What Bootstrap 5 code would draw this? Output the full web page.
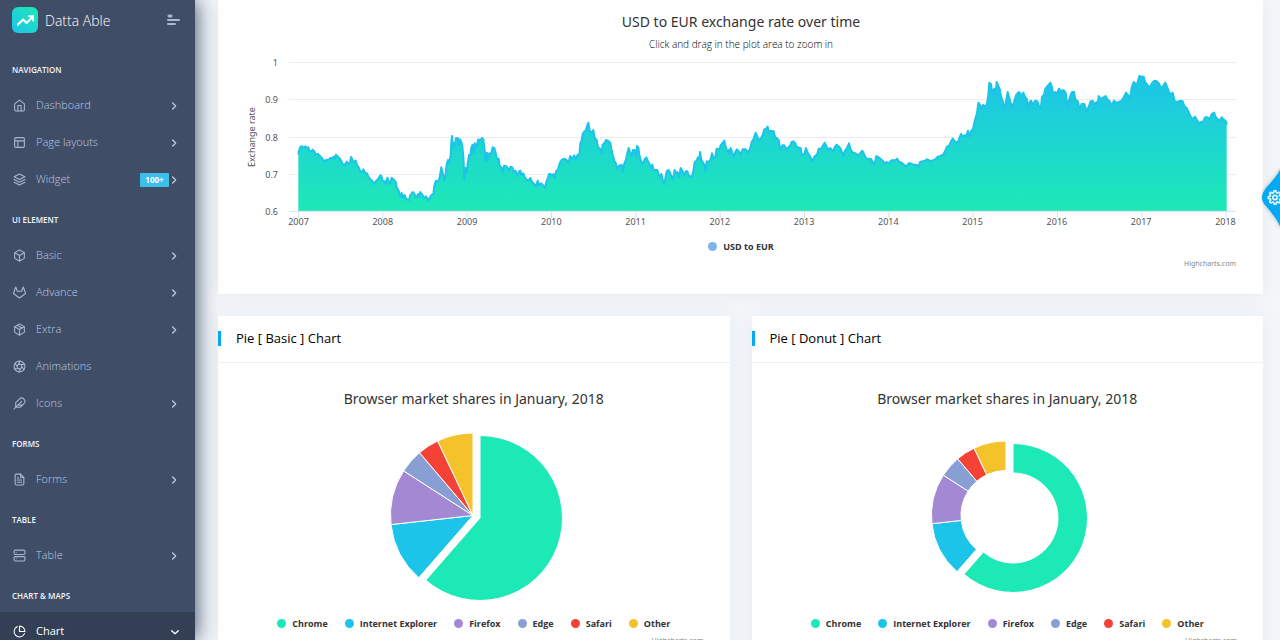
<!DOCTYPE html>
<html lang="en">
<head>
<meta charset="utf-8">
<meta name="viewport" content="width=device-width, initial-scale=1">
<title>Datta Able - Charts</title>
<link rel="stylesheet" href="https://cdn.jsdelivr.net/npm/bootstrap@5.3.0/dist/css/bootstrap.min.css">
<style>
  body { background: #f4f7fa; font-family: "Open Sans", "Noto Sans", sans-serif; font-size: 13px; color: #000; }
  a { text-decoration: none; }

  .side { width: 195px; background: #3f4d67; box-shadow: 1px 0 20px #3f4d67; z-index: 2; }
  .side-head { height: 40px; padding: 0 15px 0 12px; margin-bottom: 7px; }
  .side-head a { color: #fff; font-weight: 300; font-size: 14px; gap: 7px; }
  .logo-tile { width: 26px; height: 26px; border-radius: 6px; background: linear-gradient(-135deg, #1de9b6, #1dc4e9); }
  .collapse-btn { color: #a9b7d0; }
  .side-caption { padding: 17px 12px 11px; font-size: 8px; line-height: 11px; font-weight: 600; text-transform: uppercase; color: #f0f4fb; }
  .side-link { height: 37px; padding: 2px 17px 0 13px; color: #bccae2; font-size: 11px; font-weight: 300; }
  .side-link:hover { color: #fff; }
  .side-link.current { background: #333f54; color: #fff; font-weight: 400; padding-right: 16px; }
  .side-link .ico { width: 13px; height: 13px; margin-right: 10px; color: #a9b7d0; }
  .side-link.current .ico { color: #fff; }
  .side-link .arrow { width: 8px; height: 8px; stroke-width: 4; }
  .count { background: #3ebfea; color: #fff; font-size: 8px; line-height: 14px; font-weight: 700; border-radius: 1px; width: 29px; margin-right: 1px; text-align: center; }
  .ico, .arrow { fill: none; stroke: currentColor; stroke-width: 2; stroke-linecap: round; stroke-linejoin: round; flex: none; }

  .main-area { padding: 0 17px 40px 23px; }
  .panel { background: #fff; box-shadow: 0 1px 20px rgba(69, 90, 100, .08); }
  .panel-wide { padding: 12px 28px 25px 28px; padding-right: 27px; margin-bottom: 22px; }
  .panel-head { padding: 12px 18px 14px; border-bottom: 1px solid #f1f1f1; }
  .panel-head h2 { font-size: 13px; line-height: 20px; font-weight: 400; margin: 0; }
  .panel-head::before { content: ""; position: absolute; left: 0; top: 15px; width: 3px; height: 15px; background: #04a9f5; }
  .panel-body { padding: 26px 26px 20px; }
  .pair { --bs-gutter-x: 22px; }

  .chart-title { font: 400 14px/20px "Noto Sans", "Open Sans", sans-serif; color: #333; margin: 0; text-align: center; }
  .chart-sub { font-size: 10px; line-height: 13px; font-weight: 300; color: #000; margin: 6px 0 11px; text-align: center; }
  .axis { font: 400 9px/12px "Noto Sans", "Open Sans", sans-serif; color: #555; }
  .y-title { writing-mode: vertical-rl; transform: rotate(180deg); height: 150px; width: 12px; text-align: center; }
  .y-labels { width: 20px; height: 150px; margin-right: 11px; text-align: right; }
  .y-labels span { height: 1px; line-height: 1px; }
  .x-labels { margin: 0 10px 0 9px; }
  .x-labels span { width: 1px; display: flex; justify-content: center; }
  .plot { display: block; width: 100%; height: 154px; overflow: visible; }
  .plot line, .plot polyline { vector-effect: non-scaling-stroke; }
  .pie { display: block; width: 200px; height: 174px; margin: 21px auto 0; }
  .pie path { stroke: #fff; stroke-width: 1; stroke-linejoin: round; }
  .keys { margin: 13px -20px 0; padding: 0; list-style: none; gap: 17px; font-size: 9px; line-height: 13px; font-weight: 700; color: #333; }
  .keys-single { margin-top: 12px; }
  .keys li { gap: 6px; white-space: nowrap; }
  .dot { width: 9px; height: 9px; border-radius: 50%; }
  .credit { display: block; margin-top: 5px; font: 400 7px/11px "Noto Sans", sans-serif; color: #888; text-align: right; }

  .style-toggle { right: 0; top: 168px; width: 19px; height: 60px; overflow: hidden; border: 0; padding: 0; background: none; z-index: 3; }
  .style-toggle svg { display: block; filter: drop-shadow(0 0 2px rgba(0, 0, 0, .25)); }
</style>
</head>
<body>
<div class="d-flex vh-100 overflow-hidden">

  <nav class="side flex-shrink-0 overflow-hidden" aria-label="Main">
    <div class="side-head d-flex align-items-center justify-content-between">
      <a href="#" class="d-flex align-items-center">
        <span class="logo-tile d-flex align-items-center justify-content-center">
          <svg class="ico" width="17" height="17" viewBox="0 0 24 24"><path stroke-width="3" d="M23 6l-9.500 9.500-5-5L1 18M17 6h6v6"/></svg>
        </span>
        Datta Able
      </a>
      <button type="button" class="collapse-btn btn p-0 border-0 d-flex" aria-label="Collapse menu">
        <svg width="13" height="12" viewBox="0 0 13 12" fill="none" stroke="currentColor" stroke-width="2" stroke-linecap="round"><path d="M2 2h2" stroke-width="3"/><path d="M1 6h11M1 10h7"/></svg>
      </button>
    </div>
    <div id="menu"></div>
  </nav>

  <main class="main-area flex-grow-1 overflow-hidden">
    <section class="panel panel-wide">
      <h2 class="chart-title">USD to EUR exchange rate over time</h2>
      <p class="chart-sub">Click and drag in the plot area to zoom in</p>
      <div class="d-flex axis">
        <div class="y-title">Exchange rate</div>
        <div class="y-labels d-flex flex-column justify-content-between">
          <span>1</span><span>0.9</span><span>0.8</span><span>0.7</span><span>0.6</span>
        </div>
        <div class="flex-grow-1">
          <svg class="plot" viewBox="0 0 2841 462" preserveAspectRatio="none" role="img" aria-label="USD to EUR rate, 2007 to 2018">
            <defs><linearGradient id="fade" x1="0" y1="0" x2="0" y2="1"><stop offset="0" stop-color="#1dc4e9"/><stop offset="1" stop-color="#1de9b6"/></linearGradient></defs>
            <g id="grid" stroke="#ececec"></g>
            <polygon id="area" fill="url(#fade)"/>
            <polyline id="rate" fill="none" stroke="#1dc4e9" stroke-width="2" stroke-linejoin="round"/>
            <g id="ticks" stroke="#d8dff0"></g>
          </svg>
          <div class="x-labels d-flex justify-content-between" id="years"></div>
        </div>
      </div>
      <ul class="keys keys-single d-flex justify-content-center">
        <li class="d-flex align-items-center"><span class="dot" style="background:#7cb5ec"></span>USD to EUR</li>
      </ul>
      <a href="#" class="credit">Highcharts.com</a>
    </section>

    <div class="row pair">
      <div class="col-6">
        <section class="panel">
          <div class="panel-head position-relative"><h2>Pie [ Basic ] Chart</h2></div>
          <div class="panel-body">
            <h3 class="chart-title">Browser market shares in January, 2018</h3>
            <svg class="pie" viewBox="0 0 200 174" data-r="82" data-hole="0" role="img" aria-label="Browser shares as a pie"></svg>
            <ul class="keys d-flex justify-content-center"></ul>
            <a href="#" class="credit">Highcharts.com</a>
          </div>
        </section>
      </div>
      <div class="col-6">
        <section class="panel">
          <div class="panel-head position-relative"><h2>Pie [ Donut ] Chart</h2></div>
          <div class="panel-body">
            <h3 class="chart-title">Browser market shares in January, 2018</h3>
            <svg class="pie" viewBox="0 0 200 174" data-r="74" data-hole="45" role="img" aria-label="Browser shares as a donut"></svg>
            <ul class="keys d-flex justify-content-center"></ul>
            <a href="#" class="credit">Highcharts.com</a>
          </div>
        </section>
      </div>
    </div>
  </main>
</div>

<button type="button" class="style-toggle position-fixed" aria-label="Theme settings">
  <svg width="30" height="60" viewBox="0 0 30 60">
    <path fill="#04a9f5" d="M30 -9Q22 -5 19 2Q16 8 5 20Q1 25 1 29.500Q1 34 5 38Q16 51 19 58Q22 66 30 70Z"/>
    <g transform="translate(6.500 22) scale(.625)" fill="none" stroke="#e4f5ff" stroke-width="2.800"><circle cx="12" cy="12" r="3.500"/><path stroke-linejoin="round" d="M19.400 15a1.650 1.650 0 0 0 .33 1.820l.06.060a2 2 0 1 1-2.830 2.830l-.06-.060a1.650 1.650 0 0 0-2.820 1.170V21a2 2 0 1 1-4 0v-.090a1.650 1.650 0 0 0-2.900-1.090l-.06.060a2 2 0 1 1-2.830-2.830l.06-.060A1.650 1.650 0 0 0 3.090 14H3a2 2 0 1 1 0-4h.090a1.650 1.650 0 0 0 1.090-2.900l-.06-.060a2 2 0 1 1 2.830-2.830l.06.060A1.650 1.650 0 0 0 10 3.090V3a2 2 0 1 1 4 0v.090a1.650 1.650 0 0 0 2.820 1.180l.06-.060a2 2 0 1 1 2.830 2.830l-.06.060A1.650 1.650 0 0 0 20.910 10H21a2 2 0 1 1 0 4h-.090a1.650 1.650 0 0 0-1.510 1z"/></g>
  </svg>
</button>

<script src="https://cdn.jsdelivr.net/npm/bootstrap@5.3.0/dist/js/bootstrap.bundle.min.js"></script>
<script>
  // Sidebar menu
  const icons = {
    home: '<path d="M3 9l9-7 9 7v11a2 2 0 0 1-2 2H5a2 2 0 0 1-2-2z"/><path d="M9 22V12h6v10"/>',
    layout: '<rect x="3" y="3" width="18" height="18" rx="2"/><path d="M3 9h18M9 21V9"/>',
    layers: '<path d="M12 2L2 7l10 5 10-5zM2 17l10 5 10-5M2 12l10 5 10-5"/>',
    box: '<path d="M21 16V8a2 2 0 0 0-1-1.730l-7-4a2 2 0 0 0-2 0l-7 4A2 2 0 0 0 3 8v8a2 2 0 0 0 1 1.730l7 4a2 2 0 0 0 2 0l7-4A2 2 0 0 0 21 16z"/><path d="M3.270 6.960L12 12.010l8.730-5.050M12 22.080V12"/>',
    gitlab: '<path d="M22.650 14.390L12 22.130 1.350 14.390a.84.84 0 0 1-.3-.94l1.220-3.780 2.440-7.510a.42.42 0 0 1 .82 0l2.440 7.490h8.100l2.440-7.510a.42.42 0 0 1 .82 0l2.440 7.510L23 13.450a.84.84 0 0 1-.35.940z"/>',
    pack: '<path d="M16.500 9.400l-9-5.190M21 16V8a2 2 0 0 0-1-1.730l-7-4a2 2 0 0 0-2 0l-7 4A2 2 0 0 0 3 8v8a2 2 0 0 0 1 1.730l7 4a2 2 0 0 0 2 0l7-4A2 2 0 0 0 21 16z"/><path d="M3.270 6.960L12 12.010l8.730-5.050M12 22.080V12"/>',
    aperture: '<circle cx="12" cy="12" r="10"/><path d="M14.310 8l5.740 9.940M9.690 8h11.480M7.380 12l5.740-9.940M9.690 16L3.950 6.060M14.310 16H2.830M16.620 12l-5.740 9.940"/>',
    feather: '<path d="M20.240 12.240a6 6 0 0 0-8.490-8.490L5 10.500V19h8.500zM16 8L2 22M17.500 15H9"/>',
    file: '<path d="M14 2H6a2 2 0 0 0-2 2v16a2 2 0 0 0 2 2h12a2 2 0 0 0 2-2V8z"/><path d="M14 2v6h6M16 13H8M16 17H8M10 9H8"/>',
    server: '<rect x="2" y="2" width="20" height="8" rx="2"/><rect x="2" y="14" width="20" height="8" rx="2"/><path d="M6 6h.01M6 18h.01"/>',
    chart: '<path d="M21.210 15.890A10 10 0 1 1 8 2.830M22 12A10 10 0 0 0 12 2v10z"/>'
  };
  const menu = [
    ['Navigation', ['Dashboard', 'home'], ['Page layouts', 'layout'], ['Widget', 'layers', '100+']],
    ['UI Element', ['Basic', 'box'], ['Advance', 'gitlab'], ['Extra', 'pack'], ['Animations', 'aperture'], ['Icons', 'feather']],
    ['Forms', ['Forms', 'file']],
    ['Table', ['Table', 'server']],
    ['Chart & Maps', ['Chart', 'chart']]
  ];
  document.getElementById('menu').innerHTML = menu.map(([caption, ...items]) =>
    `<div class="side-caption">${caption.replace('&', '&amp;')}</div>` + items.map(([name, icon, count]) => {
      const open = name === 'Chart';
      const arrow = name === 'Animations' ? '' : `<svg class="arrow" viewBox="0 0 24 24"><path d="${open ? 'M2 8l10 9 10-9' : 'M8 3l9 9-9 9'}"/></svg>`;
      return `<a href="#" class="side-link d-flex align-items-center${open ? ' current' : ''}"><svg class="ico" viewBox="0 0 24 24">${icons[icon]}</svg><span class="me-auto">${name}</span>${count ? `<span class="count">${count}</span>` : ''}${arrow}</a>`;
    }).join('')).join('');

  // Exchange rate series: stretches of plot points, each with its own origin
  const stretches = [
    [-12, -6, '40,284 43,268 48,259 53,260 57,262 62,259 66,264 70,262 73,272 78,274 83,269 88,274 93,284 99,282 105,288 110,293 114,300 120,303 125,299 131,299 136,294 142,295 146,290 149,297 153,284 158,289 164,295 168,301 173,312 179,315 185,305 191,312 195,307 198,291 203,300 207,306 212,302 216,315 221,322 226,334 231,337 235,328 240,338 246,340 250,350 256,358 262,363 268,371 274,362 280,356 286,346 290,349 292,362 299,364 303,371 307,353 312,366 316,371 320,353 327,360 332,366 336,384 341,392 346,412 350,399 355,414 359,405 363,416 368,419 372,420 376,405 383,396 388,402 394,414 399,402 403,410 406,396 412,404 418,414 423,409 431,422 436,410 441,404 445,402 448,377 453,362 459,366 463,356 466,340 469,322 473,338 478,362 482,342 485,312 489,300 493,308 497,285 499,245 501,228 504,262 507,248 510,258 513,234 519,235 522,256 525,238 529,246 532,258 535,290 538,358 541,323 545,338 548,312 552,285 556,288 559,262 563,254 566,280 570,250 575,260 580,238 585,242 591,234 595,238 598,262 602,304 606,278 609,298 613,280 618,284 623,262 628,264 632,278 636,296 641,296 644,316 649,322 653,338 657,318 663,318 667,322 671,330 677,320 682,322 686,336 691,332 697,346 702,334 706,332 709,344 715,340 719,350 724,358 730,362 736,354 741,366 748,372 753,380 758,362 763,376 768,370 773,374 779,384 784,366 789,354 792,342 797,342 801,348 805,342 809,356 813,334 819,328 824,310 830,300 838,296 845,300 850,308 856,288 862,296 868,286 872,300 878,284 883,284 886,250 890,240 893,222 898,214 902,212 907,196 910,188 914,212 920,218 925,210 929,234 935,240 938,258 942,264'],
    [933, 144, '0,116 5,128 8,104 13,100 18,90 24,92 31,98 34,116 39,138 43,152 48,162 53,178 58,166 62,168 65,164 69,186 73,160 78,148 82,130 86,114 90,126 96,138 99,120 104,120 108,140 111,108 115,112 118,134 122,150 129,162 134,148 139,142 143,152 148,160 152,174 157,164 161,182 166,180 172,180 176,192 180,202 184,192 188,208 193,222 197,200 200,184 206,180 210,188 217,208 221,196 224,180 228,190 232,186 237,202 242,174 248,184 252,198 257,184 262,184 267,198 276,200 280,184 284,156 290,152 294,142 298,150 300,126 304,150 308,156 313,164 317,184 320,154 326,156 332,148 336,130 341,146 346,140 350,116 358,118 362,106 368,98 373,92 377,110 382,124 386,120 389,130 392,114 397,128 402,140 406,126 411,118 417,124 422,134 428,118 437,118 444,128 450,116 455,96 461,86 467,68 472,80 479,92 484,82 488,76 493,58 499,56 503,50 507,66 513,62 521,64 525,80 530,84 536,90 541,120 547,106 553,106 558,118 564,112 570,108 575,96 580,94 586,100 590,112 596,112 598,118 602,114 605,134 613,132 618,114 624,130 631,140 638,154 643,140 651,134 656,116 664,116 668,108 674,98 680,110 685,120 691,114 699,124 705,110 710,104 717,110 722,116 730,138 735,122 741,114 747,100 751,116 758,128 766,130 774,136 780,130 787,122 793,134 799,146 806,146 814,148 820,162 825,156 829,138 836,142 843,148 848,152 854,160 860,156 866,160 873,152 879,150 885,152 891,146 898,156 905,158 912,164 919,170 926,160 932,160 940,164'],
    [1878, -6, '0,314 8,316 11,322 15,306 23,304 30,302 36,298 44,302 52,302 60,298 68,290 76,288 84,284 90,274 96,260 102,258 108,244 113,236 118,242 124,248 130,244 134,232 138,222 142,228 148,226 154,228 159,212 164,230 168,214 174,206 178,188 181,176 186,160 190,128 196,136 201,144 205,134 210,142 216,132 220,104 223,68 228,72 232,104 237,86 242,100 245,66 250,78 255,90 258,110 263,122 270,146 274,118 278,96 282,110 287,128 293,142 298,122 304,104 312,96 320,106 325,98 330,110 336,118 339,150 343,128 348,122 355,134 360,122 367,124 373,140 378,140 381,110 387,104 391,86 398,78 406,68 410,78 414,100 420,96 425,102 432,86 438,94 445,90 452,98 457,138 462,120 466,108 471,96 477,96 481,118 488,124 494,146 500,132 508,132 515,154 521,140 527,124 533,122 539,134 544,126 548,134 551,108 556,116 562,114 572,108 577,118 584,124 590,136 597,122 604,128 612,126 620,122 626,112 633,98 640,106 645,118 650,82 656,66 662,72 667,70 673,48 680,50 686,50 690,66 697,74 705,82 710,70 718,62 726,64 732,70 740,88 745,76 751,68 756,80 762,96 768,104 773,98 779,124 788,126 796,122 803,124 808,138 815,144 820,154 825,166 832,178 840,170 846,180 853,192 858,186 864,186 870,172 878,172 884,178 890,162 897,158 903,172 909,178 913,184 920,172 928,180 934,186 935,194']
  ];
  const points = stretches.flatMap(([ox, oy, s]) => s.split(' ').map(p => {
    const [x, y] = p.split(',').map(Number);
    return `${x + ox},${y + oy}`;
  })).join(' ');
  document.getElementById('rate').setAttribute('points', points);
  document.getElementById('area').setAttribute('points', `28,447 ${points} 2813,447`);
  document.getElementById('grid').innerHTML = [1, 112, 226, 337].map(y => `<line x1="0" x2="2841" y1="${y + .5}" y2="${y + .5}"/>`).join('');
  const years = Array.from({ length: 12 }, (_, i) => 2007 + i);
  document.getElementById('ticks').innerHTML = '<line x1="0" x2="2841" y1="448" y2="448"/>' +
    years.map((_, i) => { const x = 28.5 + i * 253; return `<line x1="${x}" x2="${x}" y1="450" y2="468"/>`; }).join('');
  document.getElementById('years').innerHTML = years.map(y => `<span>${y}</span>`).join('');

  // Browser shares
  const shares = [['Chrome', 61.41, '#1de9b6'], ['Internet Explorer', 11.84, '#1dc4e9'], ['Firefox', 10.85, '#a389d4'],
                  ['Edge', 4.67, '#899fd4'], ['Safari', 4.18, '#f44236'], ['Other', 7.05, '#f4c22b']];
  document.querySelectorAll('.pie').forEach(svg => {
    const r = +svg.dataset.r, hole = +svg.dataset.hole;
    let sum = 0;
    svg.innerHTML = shares.map(([, v, color], i) => {
      const cx = i ? 99 : 106, cy = i ? 85.5 : 88;
      const at = (rad, pct) => { const a = pct / 50 * Math.PI; return `${(cx + rad * Math.sin(a)).toFixed(2)} ${(cy - rad * Math.cos(a)).toFixed(2)}`; };
      const from = sum, to = sum += v, big = v > 50 ? 1 : 0;
      return `<path fill="${color}" d="M${at(r + .5, from)}A${r + .5} ${r + .5} 0 ${big} 1 ${at(r + .5, to)}L${at(hole, to)}` +
        (hole ? `A${hole} ${hole} 0 ${big} 0 ${at(hole, from)}` : '') + 'Z"/>';
    }).join('');
    svg.nextElementSibling.innerHTML = shares.map(([name, , color]) =>
      `<li class="d-flex align-items-center"><span class="dot" style="background:${color}"></span>${name}</li>`).join('');
  });
</script>
</body>
</html>
